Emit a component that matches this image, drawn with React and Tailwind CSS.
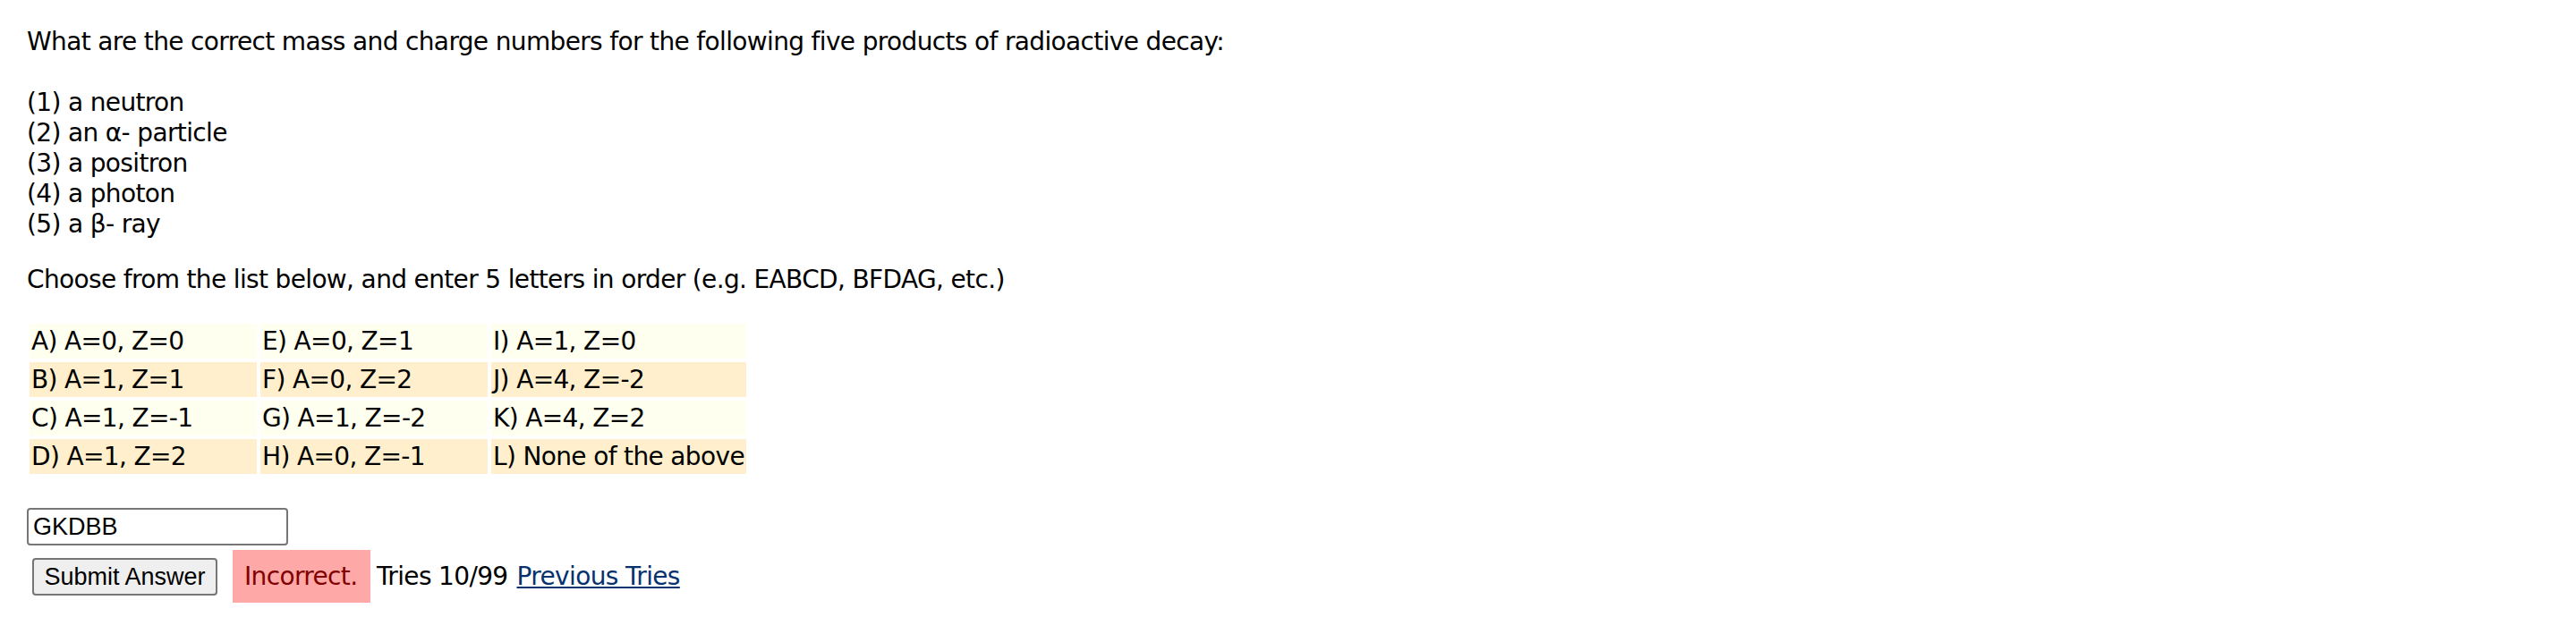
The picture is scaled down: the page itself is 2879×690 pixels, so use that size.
// Quiz problem — radioactive decay products, answer entry and feedback row.

const ROWS = [
  ['A) A=0, Z=0', 'E) A=0, Z=1', 'I) A=1, Z=0'],
  ['B) A=1, Z=1', 'F) A=0, Z=2', 'J) A=4, Z=-2'],
  ['C) A=1, Z=-1', 'G) A=1, Z=-2', 'K) A=4, Z=2'],
  ['D) A=1, Z=2', 'H) A=0, Z=-1', 'L) None of the above'],
]

const ITEMS = ['(1) a neutron', '(2) an α- particle', '(3) a positron', '(4) a photon', '(5) a β- ray']

export default function App() {
  return (
    <div className="min-h-[690px] bg-white px-[30px] pt-[30px] font-['DejaVu_Sans','Verdana',sans-serif] text-[28px] leading-[34px] tracking-[-0.65px] text-black">
      <div>
        What are the correct mass and charge numbers for the following five products of radioactive decay:
        <br />
        <br />
        {ITEMS.map((t) => (
          <div key={t}>{t}</div>
        ))}
      </div>

      <p className="mt-[28px]">Choose from the list below, and enter 5 letters in order (e.g. EABCD, BFDAG, etc.)</p>

      <div className="ml-[3px] mt-[32px] grid w-max grid-cols-[254px_254px_285px] gap-[4px]">
        {ROWS.map((row, i) =>
          row.map((cell) => (
            <div key={cell}
              className={`h-[39px] whitespace-nowrap px-[2px] pt-[3px] ${i % 2 === 0 ? 'bg-[#fffff0]' : 'bg-[#ffefcc]'}`}>
              {cell}
            </div>
          ))
        )}
      </div>

      <div className="mt-[38px]">
        <input type="text" defaultValue="GKDBB"
          className="h-[42px] w-[292px] rounded-[4px] border-2 border-[#767676] bg-white px-[5px] font-['Liberation_Sans','Arial',sans-serif] text-[27px] tracking-normal text-black outline-none" />
      </div>

      <div className="mt-[5px] flex items-center">
        <button type="button"
          className="ml-[6px] h-[42px] w-[207px] rounded-[4px] border-2 border-[#767676] bg-[#efefef] font-['Liberation_Sans','Arial',sans-serif] text-[27px] tracking-normal text-black">
          Submit Answer
        </button>
        <span className="ml-[17px] flex h-[59px] w-[154px] items-center bg-[#ffa8a8] pl-[13px] text-[#800000]">
          Incorrect.
        </span>
        <span className="ml-[7px]">Tries 10/99</span>
        <a href="#" className="ml-[10px] text-[#06326e] underline">Previous Tries</a>
      </div>
    </div>
  )
}
